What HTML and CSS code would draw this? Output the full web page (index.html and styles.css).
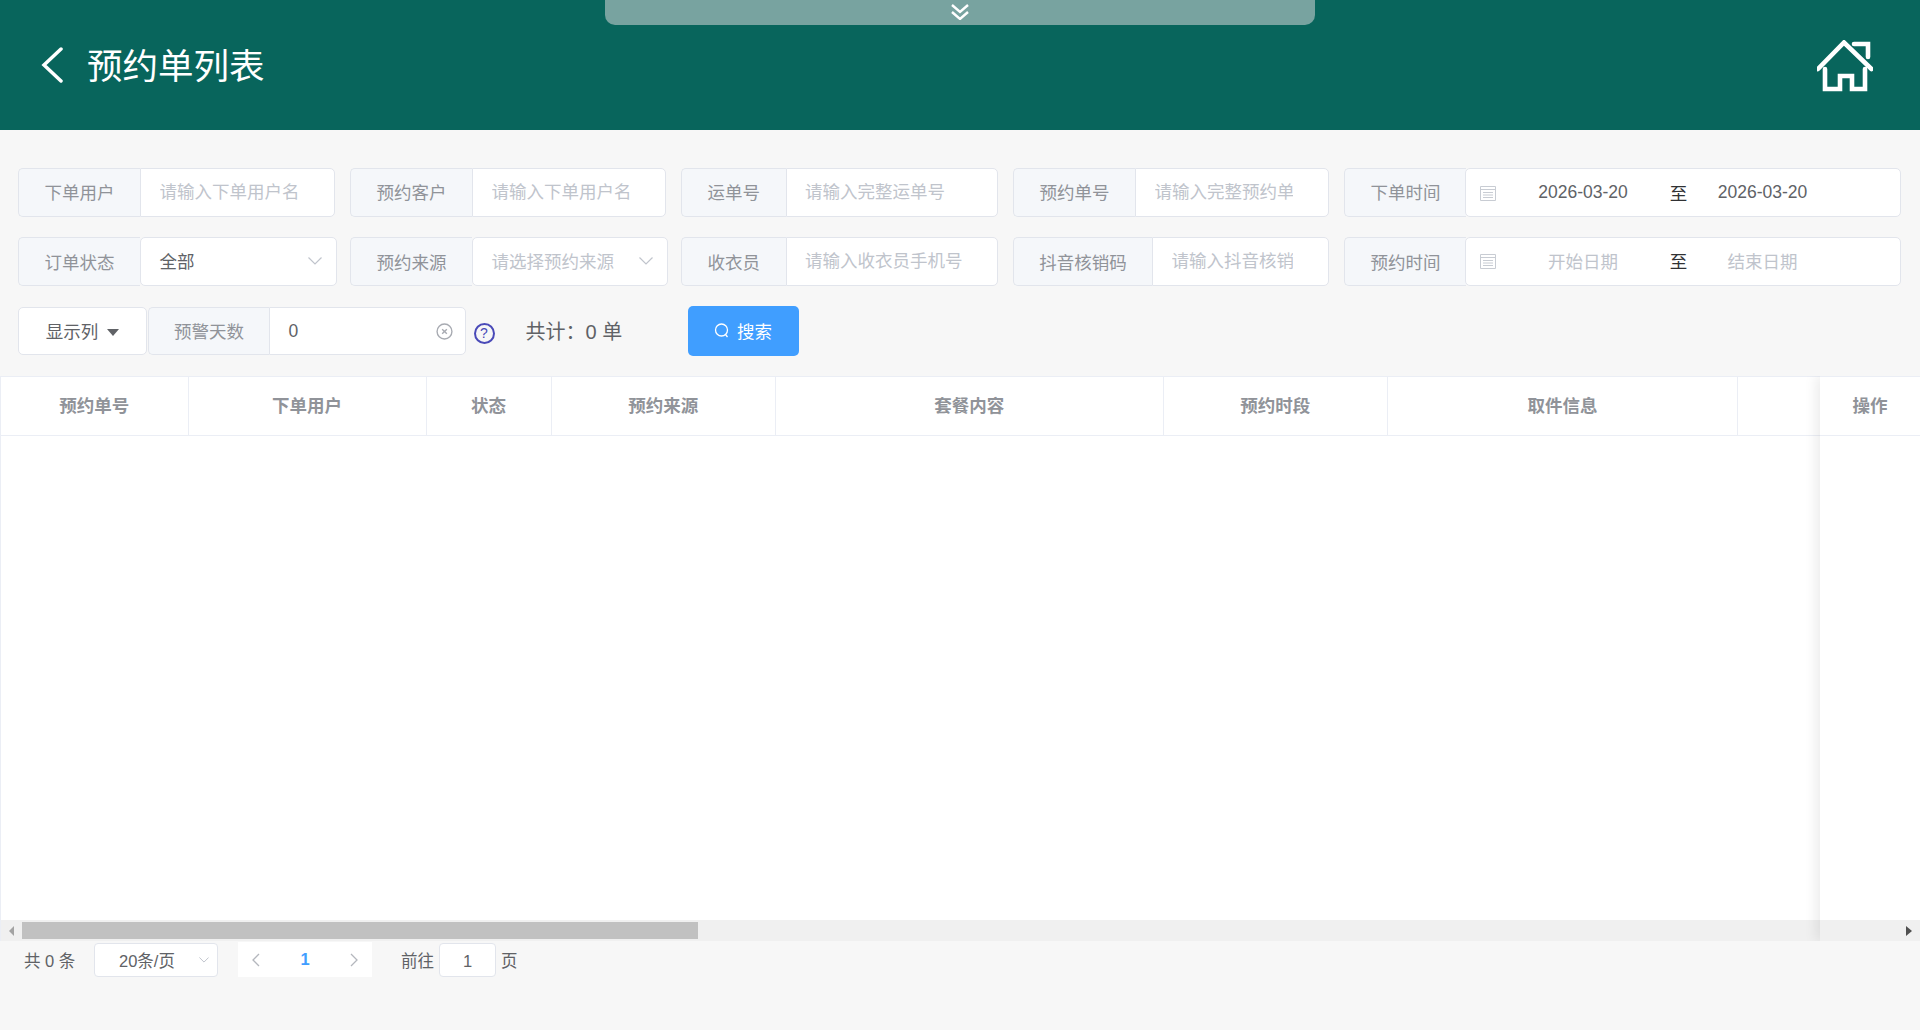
FILE: index.html
```html
<!DOCTYPE html>
<html lang="zh-CN">
<head>
    <meta charset="UTF-8">
    <meta name="viewport" content="width=device-width, initial-scale=1.0">
    <title>预约单列表</title>
    <link rel="stylesheet" href="styles.css">
</head>
<body>
    <header class="topbar">
        <div class="topbar-tab">
            <svg class="tab-icon" viewBox="0 0 18 16"><path d="M1 1l8 7 8-7M1 8l8 7 8-7"/></svg>
        </div>
        <svg class="back-icon" viewBox="0 0 22 36"><path d="M20 2L3 18l17 16"/></svg>
        <h1 class="title">预约单列表</h1>
        <svg class="home-icon" viewBox="0 0 56 54"><path d="M1 29L27 2.5 54.5 29M37 4h14v13M8 29v20h15V36h12v13h13V29"/></svg>
    </header>

    <main>
    <div class="filters">
        <div class="row row-first">
            <div class="group w1"><span class="label l1">下单用户</span><input class="field" placeholder="请输入下单用户名"></div>
            <div class="group w2"><span class="label l1">预约客户</span><input class="field" placeholder="请输入下单用户名"></div>
            <div class="group w3"><span class="label l3">运单号</span><input class="field" placeholder="请输入完整运单号"></div>
            <div class="group w4"><span class="label l1">预约单号</span><input class="field" placeholder="请输入完整预约单号"></div>
            <div class="group w5">
                <span class="label l1">下单时间</span>
                <div class="range">
                    <svg class="cal-icon" viewBox="0 0 16 16"><path d="M0.5 1.5h15v14H0.5zM0.5 4.5h15M3 7.5h10M3 10h10M3 12.5h10"/></svg>
                    <span class="date date-a value">2026-03-20</span>
                    <span class="sep">至</span>
                    <span class="date date-b value">2026-03-20</span>
                </div>
            </div>
        </div>
        <div class="row row-second">
            <div class="group w1x">
                <span class="label l1">订单状态</span>
                <div class="select"><span class="value">全部</span><svg class="arrow" viewBox="0 0 14 8"><path d="M0.5 0.5L7 7l6.5-6.5"/></svg></div>
            </div>
            <div class="group w2x">
                <span class="label l1">预约来源</span>
                <div class="select"><span class="hint">请选择预约来源</span><svg class="arrow" viewBox="0 0 14 8"><path d="M0.5 0.5L7 7l6.5-6.5"/></svg></div>
            </div>
            <div class="group w3"><span class="label l3">收衣员</span><input class="field" placeholder="请输入收衣员手机号"></div>
            <div class="group w4"><span class="label l4">抖音核销码</span><input class="field" placeholder="请输入抖音核销码"></div>
            <div class="group w5">
                <span class="label l1">预约时间</span>
                <div class="range">
                    <svg class="cal-icon" viewBox="0 0 16 16"><path d="M0.5 1.5h15v14H0.5zM0.5 4.5h15M3 7.5h10M3 10h10M3 12.5h10"/></svg>
                    <span class="date date-a hint">开始日期</span>
                    <span class="sep">至</span>
                    <span class="date date-b hint">结束日期</span>
                </div>
            </div>
        </div>
        <div class="row row-third">
            <button class="col-btn">显示列<i class="caret"></i></button>
            <div class="group w6">
                <span class="label l6">预警天数</span>
                <div class="clear-field">
                    <span class="value">0</span>
                    <svg class="clear-icon" viewBox="0 0 16 16"><circle cx="8" cy="8" r="7"/><path d="M5.8 5.8l4.4 4.4M10.2 5.8l-4.4 4.4"/></svg>
                </div>
            </div>
            <span class="help">?</span>
            <span class="total">共计：0 单</span>
            <button class="search-btn">
                <svg class="search-icon" viewBox="0 0 16 16"><circle cx="7.5" cy="7" r="6"/><path d="M11.5 11.5l2 2.5"/></svg>搜索
            </button>
        </div>
    </div>

    <div class="table">
        <div class="thead">
            <div class="th c1">预约单号</div>
            <div class="th c2">下单用户</div>
            <div class="th c3">状态</div>
            <div class="th c4">预约来源</div>
            <div class="th c5">套餐内容</div>
            <div class="th c6">预约时段</div>
            <div class="th c7">取件信息</div>
        </div>
        <div class="tbody"></div>
        <div class="scrollbar">
            <i class="sb-left"></i>
            <div class="sb-thumb"></div>
            <i class="sb-right"></i>
        </div>
        <div class="fixed-col">
            <div class="fixed-head">操作</div>
            <div class="fixed-body"></div>
        </div>
    </div>

    <div class="pager">
        <span class="pager-total">共 0 条</span>
        <div class="pager-size">20条/页<svg class="pager-arrow" viewBox="0 0 12 7"><path d="M0.5 0.5L6 6l5.5-5.5"/></svg></div>
        <div class="pager-nums">
            <svg class="pager-chev" viewBox="0 0 8 14"><path d="M7 1L1 7l6 6"/></svg>
            <span class="pager-current">1</span>
            <svg class="pager-chev" viewBox="0 0 8 14"><path d="M1 1l6 6-6 6"/></svg>
        </div>
        <span class="pager-text">前往</span>
        <div class="pager-input">1</div>
        <span class="pager-text">页</span>
    </div>
    </main>
</body>
</html>
```

FILE: styles.css
```css
* {
    box-sizing: border-box;
}
html, body {
    margin: 0;
    height: 100%;
    overflow: hidden;
}
body {
    background-color: #f7f7f7;
    font-family: "Liberation Sans", "Noto Sans CJK SC", sans-serif;
    font-size: 17.5px;
    color: #606266;
}

/* top bar */
.topbar {
    position: relative;
    height: 130px;
    background-color: #08655c;
    display: flex;
    align-items: center;
    padding: 0 47px 0 41px;
}
.topbar-tab {
    position: absolute;
    top: 0;
    left: 605px;
    width: 710px;
    height: 25px;
    background-color: #78a3a0;
    border-radius: 0 0 10px 10px;
    text-align: center;
}
.tab-icon {
    width: 18px;
    height: 16px;
    margin-top: 4px;
    fill: none;
    stroke: #fff;
    stroke-width: 2.4;
}
.back-icon {
    width: 22px;
    height: 36px;
    fill: none;
    stroke: #fff;
    stroke-width: 3.5;
    stroke-linecap: round;
}
.title {
    margin: 0 0 4px 24px;
    font-size: 35.5px;
    font-weight: 400;
    color: #fff;
    flex: 1;
}
.home-icon {
    width: 56px;
    height: 54px;
    margin-top: 3px;
    fill: none;
    stroke: #fff;
    stroke-width: 4.6;
    stroke-linecap: round;
}

/* filter rows */
.filters {
    padding: 38px 19px 0 18px;
}
.row {
    display: flex;
    gap: 15px;
    height: 49px;
}
.row-first .label {
    padding-bottom: 3px;
}
.row-second {
    margin-top: 20px;
}
.row-second .select, .row-second .range {
    padding-bottom: 2px;
}
.row-third {
    margin-top: 20px;
    height: 50px;
    gap: 0;
    align-items: center;
}
.group {
    display: flex;
    height: 100%;
    flex-shrink: 0;
}
.w1 { width: 317px; }
.w2 { width: 316px; }
.w3 { width: 317px; }
.w4 { width: 316px; }
.w5 { width: 556.5px; }
.w1x { width: 318.5px; margin-right: -1.5px; }
.w2x { width: 318px; margin-right: -2px; }
.w6 { width: 317.5px; height: 48px; margin-left: 1px; }

.label {
    display: flex;
    align-items: center;
    justify-content: center;
    flex-shrink: 0;
    padding-bottom: 1px;
    background-color: #f5f7fa;
    color: #909399;
    border: 1px solid #e2e5ec;
    border-right: 0;
    border-radius: 5px 0 0 5px;
}
.l1 { width: 122px; }
.l3 { width: 104.5px; }
.l4 { width: 139px; }
.l6 { width: 121px; }

.field, .select, .range, .clear-field {
    flex: 1;
    min-width: 0;
    height: 100%;
    background-color: #fff;
    border: 1px solid #e2e5ec;
}
.field {
    padding: 0 35px 0 18.5px;
    font: inherit;
    color: #606266;
    border-radius: 0 5px 5px 0;
    outline: none;
}
.field::placeholder, .hint {
    color: #c0c4cc;
}
.select, .clear-field {
    display: flex;
    align-items: center;
    justify-content: space-between;
    padding: 0 14px 0 18.5px;
    border-radius: 5px;
}
.clear-field {
    border-radius: 0 5px 5px 0;
    padding-right: 12px;
}
.arrow {
    width: 14px;
    height: 8px;
    fill: none;
    stroke: #c0c4cc;
    stroke-width: 1.2;
}
.clear-icon {
    width: 17px;
    height: 17px;
    fill: none;
    stroke: #a8abb2;
    stroke-width: 1.3;
}

/* date range */
.range {
    display: flex;
    align-items: center;
    padding-left: 14px;
    border-radius: 5px;
    margin-left: -1px;
}
.cal-icon {
    width: 16px;
    height: 16px;
    flex-shrink: 0;
    fill: none;
    stroke: #c8ccd3;
    stroke-width: 1;
}
.date {
    text-align: center;
}
.date-a {
    width: 170px;
    margin-left: 2px;
}
.date-b {
    width: 147px;
}
.sep {
    width: 21px;
    text-align: center;
    color: #303133;
}

/* third row */
.col-btn {
    width: 129px;
    height: 48px;
    padding: 0 0 2px 0;
    font: inherit;
    color: #606266;
    background-color: #fff;
    border: 1px solid #e2e5ec;
    border-radius: 5px;
}
.caret {
    display: inline-block;
    margin-left: 9px;
    vertical-align: middle;
    border-left: 6px solid transparent;
    border-right: 6px solid transparent;
    border-top: 7px solid #606266;
}
.help {
    width: 21px;
    height: 21px;
    margin: 4px 0 0 8px;
    border: 2px solid #4a4ab8;
    border-radius: 50%;
    color: #4a4ab8;
    font-size: 14px;
    line-height: 17px;
    text-align: center;
}
.total {
    margin-left: 31px;
    width: 162px;
    padding-bottom: 2px;
    font-size: 20px;
}
.search-btn {
    display: flex;
    align-items: center;
    justify-content: center;
    width: 111px;
    height: 50px;
    padding: 0 0 2px 0;
    font: inherit;
    color: #fff;
    background-color: #409eff;
    border: 0;
    border-radius: 5px;
}
.search-icon {
    width: 16px;
    height: 16px;
    margin: 2px 7px 0 0;
    fill: none;
    stroke: #fff;
    stroke-width: 1.3;
}

/* table */
.table {
    position: relative;
    margin-top: 20px;
    overflow: hidden;
    background-color: #fff;
    border-left: 1px solid #ebeef5;
}
.thead {
    display: flex;
    height: 60px;
    border-top: 1px solid #ebeef5;
    border-bottom: 1px solid #ebeef5;
}
.th {
    display: flex;
    align-items: center;
    justify-content: center;
    height: 100%;
    flex-shrink: 0;
    padding-bottom: 4px;
    color: #909399;
    font-weight: 700;
    border-right: 1px solid #ebeef5;
}
.c1 { width: 187.5px; }
.c2 { width: 238px; }
.c3 { width: 125px; }
.c4 { width: 224.5px; }
.c5 { width: 387.5px; }
.c6 { width: 224.5px; }
.c7 { width: 350px; }
.tbody {
    height: 484px;
}
.scrollbar {
    display: flex;
    align-items: center;
    height: 21px;
    margin-left: -1px;
    background-color: #f0f0f0;
}
.sb-left {
    margin: 0 8px 0 9px;
    border-top: 5px solid transparent;
    border-bottom: 5px solid transparent;
    border-right: 5px solid #a3a3a3;
}
.sb-thumb {
    width: 676px;
    height: 17px;
    background-color: #c1c1c1;
}
.sb-right {
    margin-left: auto;
    margin-right: 8px;
    border-top: 5px solid transparent;
    border-bottom: 5px solid transparent;
    border-left: 6px solid #505050;
}
.fixed-col {
    position: absolute;
    top: 0;
    right: 0;
    bottom: 0;
    width: 100px;
    box-shadow: -4px 0 12px rgba(0, 0, 0, 0.08);
}
.fixed-head {
    display: flex;
    align-items: center;
    justify-content: center;
    height: 60px;
    padding-bottom: 4px;
    background-color: #fff;
    color: #909399;
    font-weight: 700;
    border-top: 1px solid #ebeef5;
    border-bottom: 1px solid #ebeef5;
}
.fixed-body {
    height: 484px;
    background-color: #fff;
}

/* pagination */
.pager {
    display: flex;
    align-items: center;
    height: 37px;
    padding-left: 24px;
    font-size: 16.5px;
}
.pager-total {
    width: 70px;
}
.pager-size {
    display: flex;
    align-items: center;
    width: 124px;
    height: 34px;
    padding-left: 24px;
    background-color: #fff;
    border: 1px solid #e2e5ec;
    border-radius: 4px;
}
.pager-arrow {
    width: 10px;
    height: 6px;
    margin-left: 24px;
    fill: none;
    stroke: #c0c4cc;
    stroke-width: 1.2;
}
.pager-nums {
    display: flex;
    align-items: center;
    justify-content: space-between;
    width: 134px;
    height: 35px;
    margin-left: 20px;
    padding: 0 14px;
    background-color: #fff;
}
.pager-chev {
    width: 8px;
    height: 14px;
    fill: none;
    stroke: #b4b7bd;
    stroke-width: 1.3;
}
.pager-current {
    color: #409eff;
    font-weight: 700;
}
.pager-text {
    margin-left: 5px;
}
.pager-nums + .pager-text {
    margin-left: 29px;
}
.pager-input {
    width: 57px;
    height: 34px;
    margin-left: 5px;
    padding-top: 1px;
    line-height: 32px;
    text-align: center;
    background-color: #fff;
    border: 1px solid #e2e5ec;
    border-radius: 4px;
}
```
